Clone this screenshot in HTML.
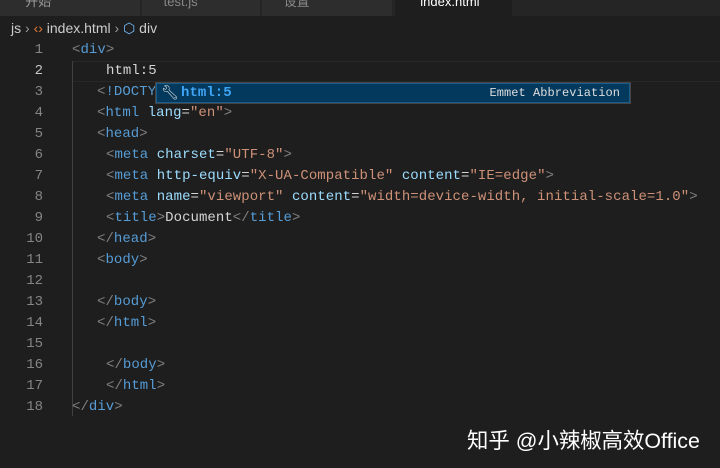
<!DOCTYPE html>
<html><head><style>
body{margin:0;width:720px;height:468px;background:#1e1e1e;overflow:hidden;position:relative;font-family:"Liberation Mono",monospace;}
.tabs{position:absolute;left:0;top:0;width:720px;height:16px;background:#252526;}
.tab{position:absolute;top:0;height:16px;background:#2d2d2d;color:#888;font:13px "Liberation Sans","Noto Sans CJK SC",sans-serif;line-height:4px;overflow:hidden}
.crumb{position:absolute;left:11px;top:18px;color:#ccc;font:14px "Liberation Sans",sans-serif;line-height:20px}
.ln{position:absolute;left:0;width:43px;text-align:right;color:#858585;font-size:14px;line-height:21px}
.cl{position:absolute;white-space:pre;font-size:14px;letter-spacing:0.05px;line-height:21px;color:#d4d4d4}
.t{color:#569cd6}.p{color:#808080}.a{color:#9cdcfe}.s{color:#ce9178}
</style></head><body>
<div class="tabs">
<div class="tab" style="left:0;width:140px;color:#999">&nbsp;&nbsp;&nbsp;&nbsp;&nbsp;&nbsp;&nbsp;开始</div>
<div class="tab" style="left:142px;width:118px">&nbsp;&nbsp;&nbsp;&nbsp;&nbsp;&nbsp;test.js</div>
<div class="tab" style="left:262px;width:130px">&nbsp;&nbsp;&nbsp;&nbsp;&nbsp;&nbsp;设置</div>
<div class="tab" style="left:395px;width:117px;background:#1e1e1e;color:#fff">&nbsp;&nbsp;&nbsp;&nbsp;&nbsp;&nbsp;&nbsp;index.html</div>
</div>
<div class="crumb">js <span style="color:#999">›</span> <span style="color:#e37933">‹›</span> index.html <span style="color:#999">›</span> <span style="color:#75beff">⬡</span> div</div>
<div style="position:absolute;left:72px;top:61px;width:648px;height:19px;border:1px solid #282828;border-left:none"></div>
<div style="position:absolute;left:72px;top:61px;width:1px;height:355px;background:#404040"></div>

<div class="ln" style="top:40px">1</div><div class="cl" style="left:72px;top:40px"><span class="p">&lt;</span><span class="t">div</span><span class="p">&gt;</span></div>
<div class="ln" style="top:61px;color:#c6c6c6">2</div><div class="cl" style="left:106px;top:61px">html:5</div>
<div class="ln" style="top:82px">3</div><div class="cl" style="left:97px;top:82px"><span class="p">&lt;</span><span class="t">!DOCTY</span></div>
<div class="ln" style="top:103px">4</div><div class="cl" style="left:97px;top:103px"><span class="p">&lt;</span><span class="t">html</span> <span class="a">lang</span>=<span class="s">"en"</span><span class="p">&gt;</span></div>
<div class="ln" style="top:124px">5</div><div class="cl" style="left:97px;top:124px"><span class="p">&lt;</span><span class="t">head</span><span class="p">&gt;</span></div>
<div class="ln" style="top:145px">6</div><div class="cl" style="left:106px;top:145px"><span class="p">&lt;</span><span class="t">meta</span> <span class="a">charset</span>=<span class="s">"UTF-8"</span><span class="p">&gt;</span></div>
<div class="ln" style="top:166px">7</div><div class="cl" style="left:106px;top:166px"><span class="p">&lt;</span><span class="t">meta</span> <span class="a">http-equiv</span>=<span class="s">"X-UA-Compatible"</span> <span class="a">content</span>=<span class="s">"IE=edge"</span><span class="p">&gt;</span></div>
<div class="ln" style="top:187px">8</div><div class="cl" style="left:106px;top:187px"><span class="p">&lt;</span><span class="t">meta</span> <span class="a">name</span>=<span class="s">"viewport"</span> <span class="a">content</span>=<span class="s">"width=device-width, initial-scale=1.0"</span><span class="p">&gt;</span></div>
<div class="ln" style="top:208px">9</div><div class="cl" style="left:106px;top:208px"><span class="p">&lt;</span><span class="t">title</span><span class="p">&gt;</span>Document<span class="p">&lt;/</span><span class="t">title</span><span class="p">&gt;</span></div>
<div class="ln" style="top:229px">10</div><div class="cl" style="left:97px;top:229px"><span class="p">&lt;/</span><span class="t">head</span><span class="p">&gt;</span></div>
<div class="ln" style="top:250px">11</div><div class="cl" style="left:97px;top:250px"><span class="p">&lt;</span><span class="t">body</span><span class="p">&gt;</span></div>
<div class="ln" style="top:271px">12</div>
<div class="ln" style="top:292px">13</div><div class="cl" style="left:97px;top:292px"><span class="p">&lt;/</span><span class="t">body</span><span class="p">&gt;</span></div>
<div class="ln" style="top:313px">14</div><div class="cl" style="left:97px;top:313px"><span class="p">&lt;/</span><span class="t">html</span><span class="p">&gt;</span></div>
<div class="ln" style="top:334px">15</div>
<div class="ln" style="top:355px">16</div><div class="cl" style="left:106px;top:355px"><span class="p">&lt;/</span><span class="t">body</span><span class="p">&gt;</span></div>
<div class="ln" style="top:376px">17</div><div class="cl" style="left:106px;top:376px"><span class="p">&lt;/</span><span class="t">html</span><span class="p">&gt;</span></div>
<div class="ln" style="top:397px">18</div><div class="cl" style="left:72px;top:397px"><span class="p">&lt;/</span><span class="t">div</span><span class="p">&gt;</span></div>

<div style="position:absolute;left:155px;top:82px;width:476px;height:22px;background:#252526;border:1px solid #454545;box-sizing:border-box">
<div style="position:absolute;left:0;top:0;right:0;bottom:0;background:#04395e;border:1px solid #1a5d8a"></div>
<div style="position:absolute;left:5px;top:2px;color:#ddd;font-size:14px">🔧︎</div>
<div class="cl" style="left:25px;top:0;line-height:20px;color:#3fa5f5;font-weight:bold">html:5</div>
<div class="cl" style="right:10px;top:0;line-height:20px;font-size:12px;color:#ddd">Emmet Abbreviation</div>
</div>
<div style="position:absolute;left:467px;top:424px;color:#fff;font:21.4px 'Liberation Sans','Noto Sans CJK SC',sans-serif;">知乎 @小辣椒高效Office</div>
</body></html>
